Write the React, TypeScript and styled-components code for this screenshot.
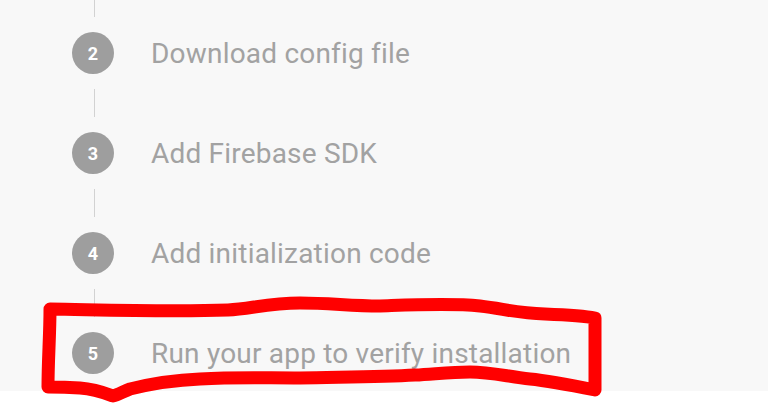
import * as React from 'react'
import styled, { createGlobalStyle } from 'styled-components'

const GlobalStyle = createGlobalStyle`
  html, body {
    margin: 0;
    padding: 0;
    background: #ffffff;
  }
  body {
    width: 768px;
    height: 408px;
    overflow: hidden;
    font-family: Roboto, 'Liberation Sans', sans-serif;
  }
`

const steps = [
  { num: 2, label: 'Download config file' },
  { num: 3, label: 'Add Firebase SDK' },
  { num: 4, label: 'Add initialization code' },
  { num: 5, label: 'Run your app to verify installation' }
]

export default function App() {
  return (
    <Page>
      <GlobalStyle />
      <Panel>
        <StepList>
          <Connector $lead />
          {steps.map((step, i) => (
            <React.Fragment key={step.num}>
              <StepRow>
                <Badge>{step.num}</Badge>
                <Label>{step.label}</Label>
              </StepRow>
              {i < steps.length - 1 && <Connector />}
            </React.Fragment>
          ))}
        </StepList>
      </Panel>
      <Scribble viewBox="0 0 768 408" width="768" height="408">
        <path
          d="M50 309 C 110 310, 170 312, 228 310 C 250 309, 268 303, 300 303 C 330 303, 350 306, 380 306 C 410 305, 450 303, 480 306 C 505 309, 515 313, 545 314 C 570 315, 585 316, 595 318 L 595 390 C 570 385, 550 381, 530 379 C 505 376, 490 372, 470 372 C 450 372, 435 374, 415 375 C 380 377, 340 377, 300 378 C 260 378, 235 377, 200 379 C 175 380, 150 384, 130 389 C 124 391, 118 395, 113 396 C 105 393, 95 389, 80 388 C 65 387, 55 387, 48 387 C 48 360, 50 335, 50 309 Z"
          fill="none"
          stroke="#ff0000"
          strokeWidth="13"
          strokeLinejoin="round"
          strokeLinecap="round"
        />
      </Scribble>
    </Page>
  )
}

const Page = styled.div`
  position: relative;
  width: 768px;
  height: 408px;
  background: #ffffff;
`

const Panel = styled.div`
  height: 391px;
  background: #f8f8f8;
  overflow: hidden;
`

const StepList = styled.div`
  display: flex;
  flex-direction: column;
  padding-left: 72px;
`

const Connector = styled.div<{ $lead?: boolean }>`
  width: 1px;
  height: ${({ $lead }) => ($lead ? '17px' : '28px')};
  margin: ${({ $lead }) => ($lead ? '0 0 15px 22px' : '15px 0 15px 22px')};
  background: #d2d2d2;
`

const StepRow = styled.div`
  display: flex;
  align-items: center;
  height: 42px;
`

const Badge = styled.div`
  width: 42px;
  height: 42px;
  flex: none;
  border-radius: 50%;
  background: #9e9e9e;
  color: #ffffff;
  display: flex;
  align-items: center;
  justify-content: center;
  font-size: 18px;
  font-weight: 700;
`

const Label = styled.div`
  margin-left: 37px;
  font-size: 28px;
  letter-spacing: 0.2px;
  color: #a2a2a2;
  white-space: nowrap;
`

const Scribble = styled.svg`
  position: absolute;
  top: 0;
  left: 0;
  pointer-events: none;
`
